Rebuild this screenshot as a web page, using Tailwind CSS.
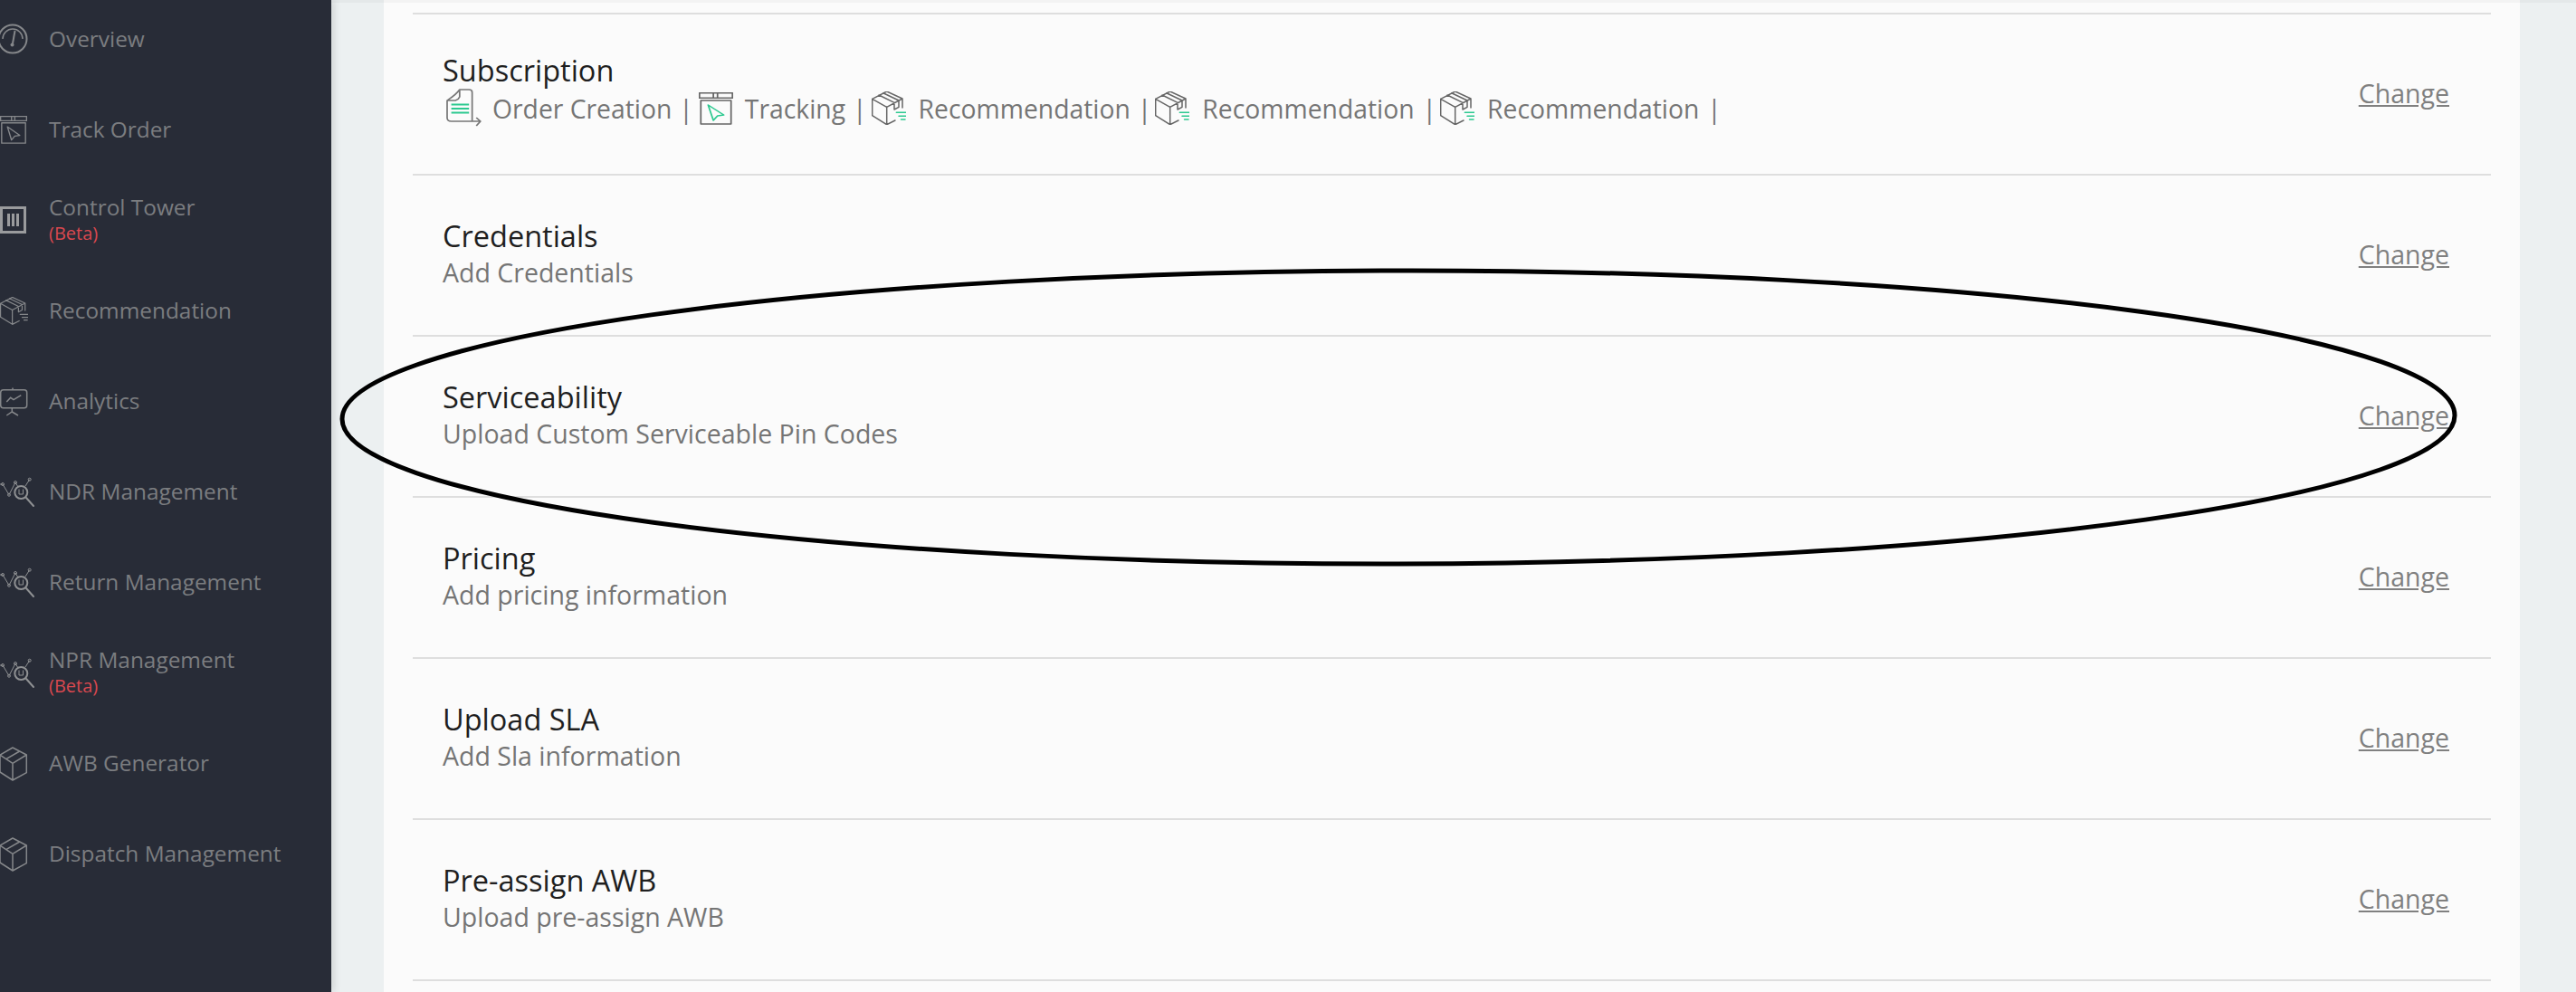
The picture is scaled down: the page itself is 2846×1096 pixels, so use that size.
<!doctype html>
<html>

<head>
    <meta charset="UTF-8">
    <meta name="viewport" content="width=device-width, initial-scale=1.0">
    <script src="https://cdn.jsdelivr.net/npm/@tailwindcss/browser@4"></script>
</head>

<body class="relative h-screen w-screen overflow-hidden bg-[#ecf0f1] font-['Open_Sans',sans-serif]">
    <!-- Shared icons -->
    <svg class="hidden">
        <symbol id="i-box" viewBox="0 0 38 37" fill="none" stroke-linejoin="round" stroke-linecap="round">
            <path stroke="currentColor" stroke-width="1.5" d="M26 32 16.7 36.7 .7 26.7V8.3L16.7 0 34 8v10M.7 8.3l16 9 17.3-9.300M16.700 17.300v19.400M8 4l17 8.300V20l5-2.700V10L12.700 1.700" />
            <path stroke="var(--accent,currentColor)" stroke-width="1.500" d="M27.300 23.300H38M30 27.300h8M32.500 31H37" />
        </symbol>
        <symbol id="i-track" viewBox="0 0 33 36" preserveAspectRatio="none" fill="none" stroke-linejoin="round">
            <path stroke="currentColor" stroke-width="1.500" d="M.7.7h31.600v5.600H.7zM14 .7v5.600M18 .7v5.600M2 9h29v26H2z" />
            <path stroke="var(--accent,currentColor)" stroke-width="1.500" d="m9 14 15 11-6 1-4 5z" />
        </symbol>
        <symbol id="i-chart" viewBox="0 0 40 40" fill="none" stroke="currentColor">
            <path stroke-width="1" d="M0 12h3l7 11.700L17 10l3 5M28 14l4.700-7.300" />
            <circle cx="3" cy="12" r="1.500" stroke-width="1" />
            <circle cx="10" cy="23.700" r="1.500" stroke-width="1" />
            <circle cx="17" cy="10" r="1.500" stroke-width="1" />
            <circle cx="32.700" cy="6.700" r="1.500" stroke-width="1" />
            <circle cx="23.300" cy="21" r="7" stroke-width="2" />
            <path stroke-width="1" d="M21 17.500V23h4.500v-5.500" />
            <path stroke-width="2" stroke-linecap="round" d="m29 27 8 9" />
        </symbol>
        <symbol id="i-carton" viewBox="0 0 40 40" fill="none" stroke="currentColor" stroke-width="1.500" stroke-linejoin="round">
            <path d="M14 3 29.300 11v19.700L14 39 0 30V11zM0 11l14 9.300L29.300 11M14 20.300V39M6.700 15.700 21.700 7" />
        </symbol>
    </svg>

    <div class="flex h-full">
        <!-- Sidebar -->
        <aside class="z-10 h-full w-[366px] shrink-0 bg-[#282c37] shadow-[3px_0_8px_rgba(0,0,0,0.12)] text-[#7b7d80] text-[24.4px]">
            <ul class="-mt-[7px]">
                <li class="flex h-[100px] items-center">
                    <svg class="mr-[14px] size-10 shrink-0 overflow-visible" viewBox="0 0 40 40" fill="none" stroke="#85878a">
                        <circle cx="14" cy="20" r="15.500" stroke-width="2" />
                        <path stroke-width="1.500" d="M3 20a11 11 0 0 1 22 0" />
                        <path stroke-width="2" d="m16.500 11-2.500 14" />
                        <circle cx="13.500" cy="26.500" r="2" fill="#85878a" stroke="none" />
                    </svg>
                    <span>Overview</span>
                </li>
                <li class="flex h-[100px] items-center">
                    <span class="mr-[14px] w-10 shrink-0">
                        <svg class="h-[31px] w-[30px] text-[#85878a]">
                            <use href="#i-track" />
                        </svg>
                    </span>
                    <span>Track Order</span>
                </li>
                <li class="flex h-[100px] items-center">
                    <span class="mr-[14px] w-10 shrink-0">
                        <span class="flex h-[30px] w-[29px] items-center justify-center gap-[2px] border-[3px] border-[#9a9b9d]">
                            <i class="h-[14px] w-[3px] bg-[#9a9b9d]"></i>
                            <i class="h-[14px] w-[3px] bg-[#9a9b9d]"></i>
                            <i class="h-[14px] w-[3px] bg-[#9a9b9d]"></i>
                        </span>
                    </span>
                    <span class="-mt-[4px] flex flex-col">
                        <span class="leading-[34px]">Control Tower</span>
                        <span class="text-[20px] leading-[24px] text-[#d9484f]">(Beta)</span>
                    </span>
                </li>
                <li class="flex h-[100px] items-center">
                    <span class="mr-[14px] w-10 shrink-0">
                        <svg class="h-[31px] w-[31px] text-[#85878a]">
                            <use href="#i-box" />
                        </svg>
                    </span>
                    <span>Recommendation</span>
                </li>
                <li class="flex h-[100px] items-center">
                    <svg class="mr-[14px] size-10 shrink-0" viewBox="0 0 40 40" fill="none" stroke="#85878a" stroke-width="1.500">
                        <rect x=".7" y="7.700" width="29" height="20" rx="3" />
                        <path d="M14 5.500v2M7.300 21l4.400-4.700 3.300 2.400 8.300-5M13.300 27.700V32M7.300 36l6-4 6.700 4" />
                    </svg>
                    <span>Analytics</span>
                </li>
                <li class="flex h-[100px] items-center">
                    <svg class="mr-[14px] size-10 shrink-0 text-[#8f9193]">
                        <use href="#i-chart" />
                    </svg>
                    <span>NDR Management</span>
                </li>
                <li class="flex h-[100px] items-center">
                    <svg class="mr-[14px] size-10 shrink-0 text-[#8f9193]">
                        <use href="#i-chart" />
                    </svg>
                    <span>Return Management</span>
                </li>
                <li class="flex h-[100px] items-center">
                    <svg class="mr-[14px] size-10 shrink-0 text-[#8f9193]">
                        <use href="#i-chart" />
                    </svg>
                    <span class="-mt-[4px] flex flex-col">
                        <span class="leading-[34px]">NPR Management</span>
                        <span class="text-[20px] leading-[24px] text-[#d9484f]">(Beta)</span>
                    </span>
                </li>
                <li class="flex h-[100px] items-center">
                    <svg class="mr-[14px] size-10 shrink-0 text-[#85878a]">
                        <use href="#i-carton" />
                    </svg>
                    <span>AWB Generator</span>
                </li>
                <li class="flex h-[100px] items-center">
                    <svg class="mr-[14px] size-10 shrink-0 text-[#85878a]">
                        <use href="#i-carton" />
                    </svg>
                    <span>Dispatch Management</span>
                </li>
            </ul>
        </aside>

        <!-- Settings card -->
        <main class="h-full flex-1 pl-[58px] pr-[62px]">
            <div class="h-full bg-[#fbfbfb] px-[32px] pt-[14px]">
                <!-- Subscription -->
                <div class="flex h-[178px] items-center justify-between border-t-2 border-[#dedede] pb-[2px] pl-[33px] pr-[46px]">
                    <div class="mb-[9px]">
                        <h3 class="text-[32.5px] leading-[42px] text-[#1f1f1f]">Subscription</h3>
                        <div class="flex items-center text-[28.3px] leading-[42px] text-[#757575] [--accent:#2cc990]">
                            <svg class="ml-[5px] mr-[12px] h-[41px] w-[38px] overflow-visible" viewBox="0 0 33 41" preserveAspectRatio="none" fill="none" stroke-linejoin="round">
                                <path stroke="#777" stroke-width="1.500" d="M0 12C4 9 9 5 12 0h9q3 0 3 3v32H4q-4 0-4-4zM0 12h8q3-1 4-4V0M24 35h8M28 31l4 4-4 5" />
                                <path stroke="#2cc990" stroke-width="2" d="M4 16.500h17M4 21h17M4 25.500h17" />
                            </svg>
                            <span>Order Creation</span>
                            <span class="ml-[8px] mr-[6px]">|</span>
                            <svg class="mr-[13px] h-[36px] w-[38px] text-[#666]">
                                <use href="#i-track" />
                            </svg>
                            <span>Tracking</span>
                            <span class="ml-[8px] mr-[5px]">|</span>
                            <svg class="mr-[14px] h-[37px] w-[38px] text-[#666]">
                                <use href="#i-box" />
                            </svg>
                            <span>Recommendation</span>
                            <span class="ml-[8px] mr-[4px]">|</span>
                            <svg class="mr-[14px] h-[37px] w-[38px] text-[#666]">
                                <use href="#i-box" />
                            </svg>
                            <span>Recommendation</span>
                            <span class="ml-[9px] mr-[4px]">|</span>
                            <svg class="mr-[14px] h-[37px] w-[38px] text-[#666]">
                                <use href="#i-box" />
                            </svg>
                            <span>Recommendation</span>
                            <span class="ml-[9px]">|</span>
                        </div>
                    </div>
                    <a class="text-[28.5px] text-[#808080] underline">Change</a>
                </div>

                <div class="flex h-[178px] items-center justify-between border-t-2 border-[#dedede] pb-[2px] pl-[33px] pr-[46px]">
                    <div>
                        <h3 class="text-[32.5px] leading-[40px] text-[#1f1f1f]">Credentials</h3>
                        <p class="text-[28.5px] leading-[40px] text-[#757575]">Add Credentials</p>
                    </div>
                    <a class="text-[28.5px] text-[#808080] underline">Change</a>
                </div>

                <div class="flex h-[178px] items-center justify-between border-t-2 border-[#dedede] pb-[2px] pl-[33px] pr-[46px]">
                    <div>
                        <h3 class="text-[32.5px] leading-[40px] text-[#1f1f1f]">Serviceability</h3>
                        <p class="text-[28.5px] leading-[40px] text-[#757575]">Upload Custom Serviceable Pin Codes</p>
                    </div>
                    <a class="text-[28.5px] text-[#808080] underline">Change</a>
                </div>

                <div class="flex h-[178px] items-center justify-between border-t-2 border-[#dedede] pb-[2px] pl-[33px] pr-[46px]">
                    <div>
                        <h3 class="text-[32.5px] leading-[40px] text-[#1f1f1f]">Pricing</h3>
                        <p class="text-[28.5px] leading-[40px] text-[#757575]">Add pricing information</p>
                    </div>
                    <a class="text-[28.5px] text-[#808080] underline">Change</a>
                </div>

                <div class="flex h-[178px] items-center justify-between border-t-2 border-[#dedede] pb-[2px] pl-[33px] pr-[46px]">
                    <div>
                        <h3 class="text-[32.5px] leading-[40px] text-[#1f1f1f]">Upload SLA</h3>
                        <p class="text-[28.5px] leading-[40px] text-[#757575]">Add Sla information</p>
                    </div>
                    <a class="text-[28.5px] text-[#808080] underline">Change</a>
                </div>

                <div class="flex h-[178px] items-center justify-between border-t-2 border-[#dedede] pb-[2px] pl-[33px] pr-[46px]">
                    <div>
                        <h3 class="text-[32.5px] leading-[40px] text-[#1f1f1f]">Pre-assign AWB</h3>
                        <p class="text-[28.5px] leading-[40px] text-[#757575]">Upload pre-assign AWB</p>
                    </div>
                    <a class="text-[28.5px] text-[#808080] underline">Change</a>
                </div>

                <div class="border-t-2 border-[#dedede]"></div>
            </div>
        </main>
    </div>

    <!-- Top edge shadow -->
    <div class="absolute inset-x-0 top-0 h-[3px] bg-black/[0.03]"></div>

    <!-- Hand-drawn annotation -->
    <svg class="pointer-events-none absolute inset-0 z-20 h-full w-full" fill="none">
        <ellipse cx="1545" cy="461" rx="1167" ry="162" stroke="#000" stroke-width="5" transform="rotate(-0.1 1545 461)" />
    </svg>
</body>

</html>
